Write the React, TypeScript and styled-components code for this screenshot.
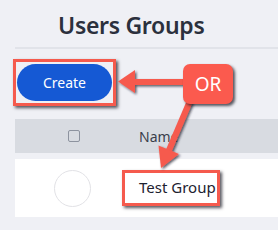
import React from "react";
import styled, { createGlobalStyle } from "styled-components";

const GlobalStyle = createGlobalStyle`
  html, body {
    margin: 0;
    padding: 0;
    background: #eff0f5;
    font-family: "Noto Sans", "Liberation Sans", sans-serif;
    overflow: hidden;
  }
`;

const Page = styled.div`
  position: relative;
  width: 278px;
  height: 230px;
  padding-left: 15px;
  box-sizing: border-box;
`;

const TitleBar = styled.header`
  height: 49px;
  border-bottom: 2px solid #e1e3e9;
  box-sizing: border-box;
  display: flex;
  align-items: center;
  padding-left: 43px;
  padding-top: 3px;
`;

const Title = styled.h1`
  margin: 0;
  font-size: 23px;
  font-weight: 600;
  color: #2b303d;
  letter-spacing: -0.3px;
`;

const Toolbar = styled.div`
  display: flex;
  padding-top: 10px;
  margin-left: -2px;
`;

const Callout = styled.div<{ $pad?: string }>`
  border: 3px solid #f55a4d;
  box-shadow: 2px 2px 3px rgba(30, 30, 40, 0.75);
  padding: ${(p) => p.$pad ?? "2px 1px"};
  display: flex;
  align-items: center;
  background: transparent;
`;

const CreateButton = styled.button`
  width: 95px;
  height: 37px;
  border: none;
  border-radius: 19px;
  background: #1559d4;
  color: #fff;
  font-family: inherit;
  font-size: 14px;
  cursor: pointer;
`;

const Table = styled.div`
  margin-top: 13px;
  display: flex;
  flex-direction: column;
  gap: 6px;
`;

const HeaderRow = styled.div`
  height: 34px;
  background: #d8dbe1;
  display: grid;
  grid-template-columns: 124px 1fr;
  align-items: center;
`;

const BodyRow = styled.div`
  height: 58px;
  background: #ffffff;
  display: grid;
  grid-template-columns: 107px 1fr;
  align-items: center;
`;

const Cell = styled.div<{ $center?: boolean }>`
  display: flex;
  align-items: center;
  justify-content: ${(p) => (p.$center ? "center" : "flex-start")};
`;

const Checkbox = styled.span`
  width: 12px;
  height: 12px;
  border: 1.5px solid #8d939f;
  border-radius: 2px;
  box-sizing: border-box;
  margin-left: -6px;
`;

const HeaderText = styled.span`
  font-size: 14px;
  color: #3a3f4c;
`;

const Avatar = styled.span`
  width: 37px;
  height: 37px;
  border-radius: 50%;
  border: 1px solid #e2e2e6;
  box-sizing: border-box;
  margin-left: 7px;
`;

const GroupName = styled.span`
  display: block;
  width: 78px;
  height: 30px;
  line-height: 29px;
  font-size: 15px;
  color: #1d2230;
  background: #fff;
  padding-left: 14px;
`;

const Overlay = styled.svg`
  position: absolute;
  left: 0;
  top: 0;
  width: 278px;
  height: 230px;
  pointer-events: none;
  overflow: visible;
`;

const OrBadge = styled.div`
  position: absolute;
  left: 183px;
  top: 64px;
  width: 50px;
  height: 40px;
  border-radius: 7px;
  background: #fb5a4e;
  box-shadow: 2px 2px 3px rgba(30, 30, 40, 0.75);
  color: #fff;
  font-size: 19px;
  display: flex;
  align-items: center;
  justify-content: center;
`;

const red = "#f65a4e";

export default function App() {
  return (
    <>
      <GlobalStyle />
      <Page>
        <TitleBar>
          <Title>Users Groups</Title>
        </TitleBar>
        <Toolbar>
          <Callout>
            <CreateButton>Create</CreateButton>
          </Callout>
        </Toolbar>
        <Table>
          <HeaderRow>
            <Cell $center>
              <Checkbox />
            </Cell>
            <Cell>
              <HeaderText>Name</HeaderText>
            </Cell>
          </HeaderRow>
          <BodyRow>
            <Cell $center>
              <Avatar />
            </Cell>
            <Cell>
              <Callout $pad="0">
                <GroupName>Test Group</GroupName>
              </Callout>
            </Cell>
          </BodyRow>
        </Table>
        <Overlay viewBox="0 0 278 230">
          <defs>
            <filter id="sh" x="-20%" y="-20%" width="140%" height="140%">
              <feDropShadow dx="1.5" dy="1.5" stdDeviation="1.2" floodColor="#1e1e28" floodOpacity="0.7" />
            </filter>
          </defs>
          <g filter="url(#sh)" fill={red} stroke="none">
            <rect x="131" y="79" width="56" height="6" />
            <polygon points="118,81.5 135,70 135,93" />
            <polygon points="187.5,99 193,101.5 171.5,152 166,149.5" />
            <polygon points="161,168 179,154 158.5,145.5" />
          </g>
        </Overlay>
        <OrBadge>OR</OrBadge>
      </Page>
    </>
  );
}
